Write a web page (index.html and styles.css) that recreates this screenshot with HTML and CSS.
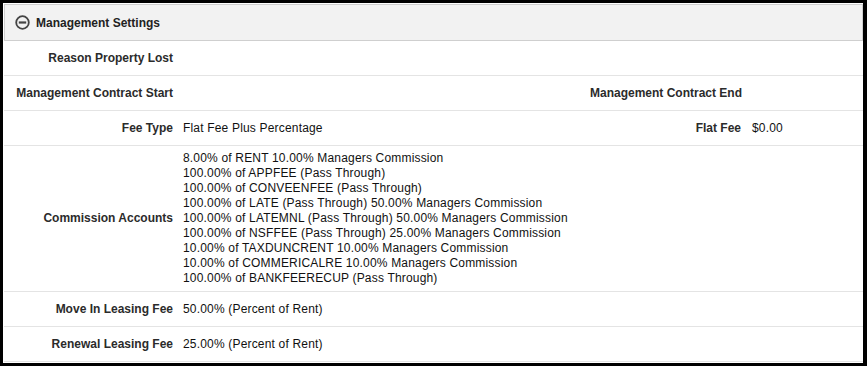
FILE: index.html
```html
<!DOCTYPE html>
<html lang="en">
<head>
  <meta charset="UTF-8" />
  <title>Management Settings</title>
  <link rel="stylesheet" href="styles.css">
</head>
<body>
  <div class="frame">
    <div class="panel">
      <div class="panel-head">
        <svg class="toggle" width="15" height="15" viewBox="0 0 15 15">
          <circle cx="7.5" cy="7.5" r="6.3" fill="none" stroke="#444" stroke-width="1.8"/>
          <rect x="3.8" y="6.4" width="7.4" height="2.2" fill="#444"/>
        </svg>
        <span>Management Settings</span>
      </div>

      <table class="settings">
        <colgroup>
          <col class="c-label">
          <col class="c-value">
          <col class="c-label2">
          <col>
        </colgroup>
        <tr>
          <td class="label">Reason Property Lost</td>
          <td></td>
          <td></td>
          <td></td>
        </tr>
        <tr>
          <td class="label">Management Contract Start</td>
          <td></td>
          <td class="label">Management Contract End</td>
          <td></td>
        </tr>
        <tr>
          <td class="label">Fee Type</td>
          <td>Flat Fee Plus Percentage</td>
          <td class="label">Flat Fee</td>
          <td class="value2">$0.00</td>
        </tr>
        <tr>
          <td class="label">Commission Accounts</td>
          <td colspan="3">
            8.00% of RENT 10.00% Managers Commission<br>
            100.00% of APPFEE (Pass Through)<br>
            100.00% of CONVEENFEE (Pass Through)<br>
            100.00% of LATE (Pass Through) 50.00% Managers Commission<br>
            100.00% of LATEMNL (Pass Through) 50.00% Managers Commission<br>
            100.00% of NSFFEE (Pass Through) 25.00% Managers Commission<br>
            10.00% of TAXDUNCRENT 10.00% Managers Commission<br>
            10.00% of COMMERICALRE 10.00% Managers Commission<br>
            100.00% of BANKFEERECUP (Pass Through)
          </td>
        </tr>
        <tr>
          <td class="label">Move In Leasing Fee</td>
          <td colspan="3">50.00% (Percent of Rent)</td>
        </tr>
        <tr>
          <td class="label">Renewal Leasing Fee</td>
          <td colspan="3">25.00% (Percent of Rent)</td>
        </tr>
      </table>
    </div>
  </div>
</body>
</html>
```

FILE: styles.css
```css
html, body {
  height: 100%;
}

body {
  margin: 0;
  background: #000;
  font-family: "Liberation Sans", Arial, sans-serif;
  font-size: 12px;
  color: #1a1a1a;
  box-sizing: border-box;
  padding: 3px 4px 3px 3px;
  overflow: hidden;
}

.frame {
  box-sizing: border-box;
  background: #fff;
  padding: 1px 0 0 1px;
  height: 100%;
  overflow: hidden;
}

.panel {
  background: #fff;
}

.panel-head {
  display: flex;
  align-items: center;
  gap: 6px;
  height: 35px;
  padding-left: 10px;
  background: #f2f2f2;
  border: 1px solid #cfcfcf;
  font-weight: bold;
  color: #222;
}

.toggle {
  display: block;
}

.settings {
  width: 100%;
  border-collapse: collapse;
  table-layout: fixed;
}

.c-label {
  width: 174px;
}

.c-value {
  width: 407px;
}

.c-label2 {
  width: 161px;
}

.settings tr {
  border-bottom: 1px solid #e4e4e4;
}

.settings td {
  height: 24px;
  padding: 5px;
  line-height: 15px;
  vertical-align: middle;
  color: #111;
  letter-spacing: 0.18px;
}

.settings td.label {
  text-align: right;
  font-weight: bold;
  color: #2b2b2b;
  white-space: nowrap;
  letter-spacing: 0;
}

.settings td.value2 {
  padding-left: 6px;
}
```
